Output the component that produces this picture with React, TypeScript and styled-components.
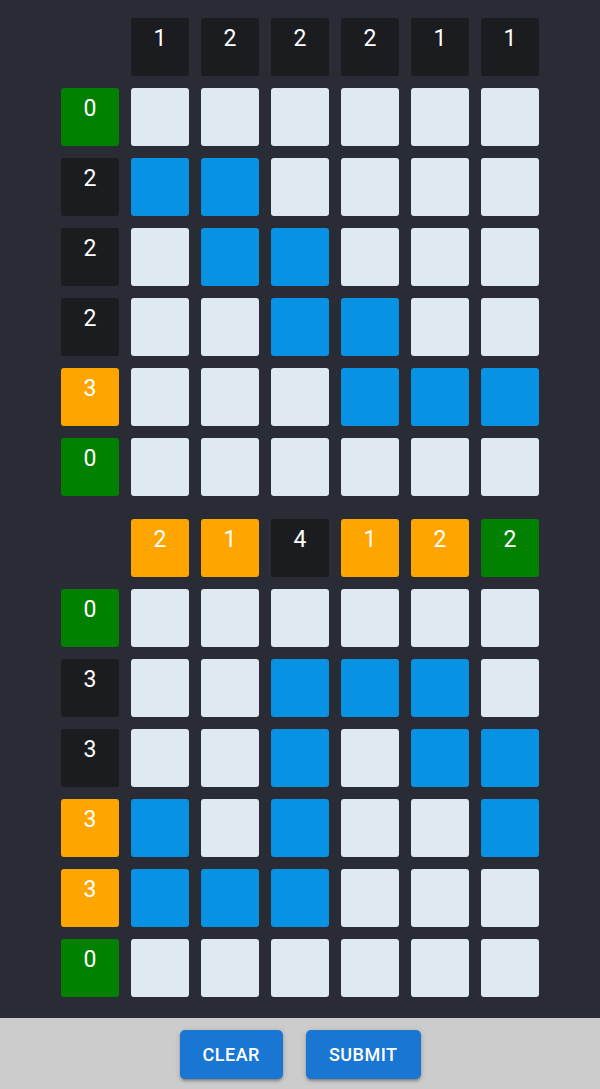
import { createGlobalStyle } from "styled-components";
import styled from "styled-components";

const GlobalStyle = createGlobalStyle`
  html, body {
    margin: 0;
    padding: 0;
    background-color: #292c34;
    font-family: Roboto, "Liberation Sans", sans-serif;
  }
`;

export const Page = styled.div`
  display: flex;
  flex-direction: column;
  min-height: 1089px;
  background-color: #292c34;
`;

export const Puzzles = styled.div`
  flex: 1;
  display: flex;
  flex-direction: column;
  align-items: center;
  gap: 23px;
  padding: 18px 0 21px 0;
`;

export const Board = styled.div`
  display: grid;
  grid-template-columns: repeat(7, 58px);
  grid-auto-rows: 58px;
  gap: 12px;
`;

type ClueColor = "dark" | "green" | "orange";

const clueBg: Record<ClueColor, string> = {
  dark: "#1b1c20",
  green: "#028002",
  orange: "#ffa500",
};

export const Clue = styled.div<{ $color: ClueColor }>`
  box-sizing: border-box;
  border-radius: 3px;
  background-color: ${(p) => clueBg[p.$color]};
  color: #ffffff;
  font-size: 23px;
  line-height: 24px;
  padding-top: 9px;
  text-align: center;
`;

export const Corner = styled.div``;

export const Cell = styled.div<{ $on: boolean }>`
  border-radius: 3px;
  background-color: ${(p) => (p.$on ? "#0892e4" : "#dfe9f1")};
  cursor: pointer;
`;

export const BottomBar = styled.div`
  display: flex;
  justify-content: center;
  gap: 23px;
  background-color: #cccccc;
  padding: 12px 0 10px 0;
  height: 49px;
`;

export const ActionButton = styled.button`
  height: 49px;
  padding: 0 23px;
  border: none;
  border-radius: 5px;
  background-color: #1976d2;
  color: #ffffff;
  font-family: Roboto, "Liberation Sans", sans-serif;
  font-weight: 500;
  font-size: 18px;
  letter-spacing: 0.5px;
  box-shadow: 0 3px 3px -2px rgba(0, 0, 0, 0.25), 0 2px 3px 0 rgba(0, 0, 0, 0.16),
    0 1px 6px 0 rgba(0, 0, 0, 0.14);
  cursor: pointer;
`;

type PuzzleData = {
  cols: { n: number; c: ClueColor }[];
  rows: { n: number; c: ClueColor; cells: string }[];
};

const puzzles: PuzzleData[] = [
  {
    cols: [
      { n: 1, c: "dark" },
      { n: 2, c: "dark" },
      { n: 2, c: "dark" },
      { n: 2, c: "dark" },
      { n: 1, c: "dark" },
      { n: 1, c: "dark" },
    ],
    rows: [
      { n: 0, c: "green", cells: "000000" },
      { n: 2, c: "dark", cells: "110000" },
      { n: 2, c: "dark", cells: "011000" },
      { n: 2, c: "dark", cells: "001100" },
      { n: 3, c: "orange", cells: "000111" },
      { n: 0, c: "green", cells: "000000" },
    ],
  },
  {
    cols: [
      { n: 2, c: "orange" },
      { n: 1, c: "orange" },
      { n: 4, c: "dark" },
      { n: 1, c: "orange" },
      { n: 2, c: "orange" },
      { n: 2, c: "green" },
    ],
    rows: [
      { n: 0, c: "green", cells: "000000" },
      { n: 3, c: "dark", cells: "001110" },
      { n: 3, c: "dark", cells: "001011" },
      { n: 3, c: "orange", cells: "101001" },
      { n: 3, c: "orange", cells: "111000" },
      { n: 0, c: "green", cells: "000000" },
    ],
  },
];

const Puzzle = ({ data }: { data: PuzzleData }) => (
  <Board>
    <Corner />
    {data.cols.map((col, i) => (
      <Clue key={"c" + i} $color={col.c}>
        {col.n}
      </Clue>
    ))}
    {data.rows.map((row, r) => [
      <Clue key={"r" + r} $color={row.c}>
        {row.n}
      </Clue>,
      ...row.cells
        .split("")
        .map((v, i) => <Cell key={r + "-" + i} $on={v === "1"} />),
    ])}
  </Board>
);

const App = () => {
  return (
    <Page>
      <GlobalStyle />
      <Puzzles>
        {puzzles.map((p, i) => (
          <Puzzle key={i} data={p} />
        ))}
      </Puzzles>
      <BottomBar>
        <ActionButton>CLEAR</ActionButton>
        <ActionButton>SUBMIT</ActionButton>
      </BottomBar>
    </Page>
  );
};

export default App;
